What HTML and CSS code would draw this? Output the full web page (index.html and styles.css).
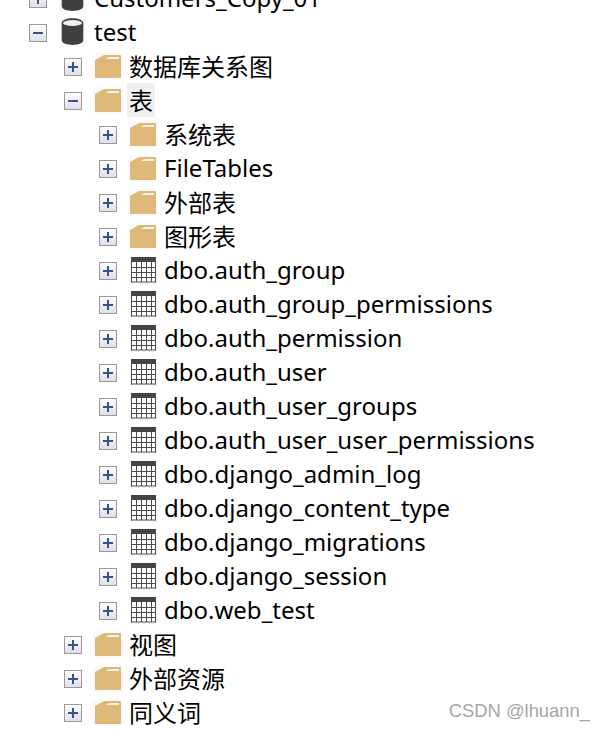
FILE: index.html
```html
<!DOCTYPE html>
<html lang="en">
	<head>
		<meta charset="UTF-8" />
		<meta name="viewport" content="width=device-width, initial-scale=1.0" />
		<title>Object Explorer</title>
		<link rel="stylesheet" href="styles.css">
	</head>
	<body>
		<svg class="defs" width="0" height="0">
			<linearGradient id="box" x1="0" y1="0" x2="0" y2="1">
				<stop offset="0" stop-color="#ffffff" />
				<stop offset="1" stop-color="#dcdfe6" />
			</linearGradient>
			<symbol id="plus" viewBox="0 0 18 18">
				<rect x="0.5" y="0.5" width="17" height="17" fill="url(#box)" stroke="#999" />
				<path d="M4 9h10M9 4v10" stroke="#36528f" stroke-width="2" />
			</symbol>
			<symbol id="minus" viewBox="0 0 18 18">
				<rect x="0.5" y="0.5" width="17" height="17" fill="url(#box)" stroke="#999" />
				<path d="M4 9h10" stroke="#36528f" stroke-width="2" />
			</symbol>
			<symbol id="folder" viewBox="0 0 30 30">
				<rect x="0" y="1" width="30" height="27" rx="3" fill="#fafafa" />
				<path d="M2 8l9-5h16q1 0 1 1v21q0 1-1 1h-24q-1 0-1-1z" fill="#deb878" />
				<path d="M13 7l3-2h10v2z" fill="#f7f3ea" />
			</symbol>
			<symbol id="db" viewBox="0 0 30 30">
				<rect x="1" y="0" width="27" height="29" rx="4" fill="#fafafa" />
				<path d="M3.700 5c0-6.500 21.600-6.500 21.600 0v17c0 6.500-21.600 6.500-21.600 0z" fill="#404040" />
				<ellipse cx="14.500" cy="5" rx="9.500" ry="3" fill="#f0f0f0" />
			</symbol>
			<symbol id="table" viewBox="0 0 30 30">
				<rect x="1" y="0" width="29" height="28" rx="2" fill="#fafafa" />
				<rect x="3" y="1" width="25" height="25.500" fill="#fff" />
				<rect x="3" y="1" width="25" height="5" fill="#444" />
				<path d="M3 11.500h25M3 16.500h25M3 21.500h25M3 26h25M3.500 1v25.500M8.500 6v20M13.500 6v20M18.500 6v20M23.500 6v20M27.500 1v25.500" stroke="#4c4c4c" />
			</symbol>
		</svg>

		<ul class="tree">
			<li class="node"><svg class="toggle"><use href="#plus" /></svg><svg class="icon"><use href="#db" /></svg><span class="label">Customers_Copy_01</span></li>
			<li class="node"><svg class="toggle"><use href="#minus" /></svg><svg class="icon"><use href="#db" /></svg><span class="label">test</span></li>
			<ul class="tree">
				<li class="node"><svg class="toggle"><use href="#plus" /></svg><svg class="icon"><use href="#folder" /></svg><span class="label">数据库关系图</span></li>
				<li class="node"><svg class="toggle"><use href="#minus" /></svg><svg class="icon"><use href="#folder" /></svg><span class="label selected">表</span></li>
				<ul class="tree">
					<li class="node"><svg class="toggle"><use href="#plus" /></svg><svg class="icon"><use href="#folder" /></svg><span class="label">系统表</span></li>
					<li class="node"><svg class="toggle"><use href="#plus" /></svg><svg class="icon"><use href="#folder" /></svg><span class="label">FileTables</span></li>
					<li class="node"><svg class="toggle"><use href="#plus" /></svg><svg class="icon"><use href="#folder" /></svg><span class="label">外部表</span></li>
					<li class="node"><svg class="toggle"><use href="#plus" /></svg><svg class="icon"><use href="#folder" /></svg><span class="label">图形表</span></li>
					<li class="node"><svg class="toggle"><use href="#plus" /></svg><svg class="icon"><use href="#table" /></svg><span class="label">dbo.auth_group</span></li>
					<li class="node"><svg class="toggle"><use href="#plus" /></svg><svg class="icon"><use href="#table" /></svg><span class="label">dbo.auth_group_permissions</span></li>
					<li class="node"><svg class="toggle"><use href="#plus" /></svg><svg class="icon"><use href="#table" /></svg><span class="label">dbo.auth_permission</span></li>
					<li class="node"><svg class="toggle"><use href="#plus" /></svg><svg class="icon"><use href="#table" /></svg><span class="label">dbo.auth_user</span></li>
					<li class="node"><svg class="toggle"><use href="#plus" /></svg><svg class="icon"><use href="#table" /></svg><span class="label">dbo.auth_user_groups</span></li>
					<li class="node"><svg class="toggle"><use href="#plus" /></svg><svg class="icon"><use href="#table" /></svg><span class="label">dbo.auth_user_user_permissions</span></li>
					<li class="node"><svg class="toggle"><use href="#plus" /></svg><svg class="icon"><use href="#table" /></svg><span class="label">dbo.django_admin_log</span></li>
					<li class="node"><svg class="toggle"><use href="#plus" /></svg><svg class="icon"><use href="#table" /></svg><span class="label">dbo.django_content_type</span></li>
					<li class="node"><svg class="toggle"><use href="#plus" /></svg><svg class="icon"><use href="#table" /></svg><span class="label">dbo.django_migrations</span></li>
					<li class="node"><svg class="toggle"><use href="#plus" /></svg><svg class="icon"><use href="#table" /></svg><span class="label">dbo.django_session</span></li>
					<li class="node"><svg class="toggle"><use href="#plus" /></svg><svg class="icon"><use href="#table" /></svg><span class="label">dbo.web_test</span></li>
				</ul>
				<li class="node"><svg class="toggle"><use href="#plus" /></svg><svg class="icon"><use href="#folder" /></svg><span class="label">视图</span></li>
				<li class="node"><svg class="toggle"><use href="#plus" /></svg><svg class="icon"><use href="#folder" /></svg><span class="label">外部资源</span></li>
				<li class="node"><svg class="toggle"><use href="#plus" /></svg><svg class="icon"><use href="#folder" /></svg><span class="label">同义词</span></li>
			</ul>
		</ul>

		<div class="watermark">CSDN @lhuann_</div>
	</body>
</html>
```

FILE: styles.css
```css
html,
body {
	margin: 0;
	padding: 0;
	background-color: white;
	height: 730px;
	overflow: hidden;
}
body {
	position: relative;
	font-family: "Noto Sans", "Noto Sans CJK SC", sans-serif;
	color: #000;
}
.defs {
	position: absolute;
}
.tree {
	list-style: none;
	margin: 0;
	padding: 0 0 0 35px;
}
body > .tree {
	margin-top: -18px;
	padding-left: 29px;
}
.node {
	display: flex;
	align-items: center;
	height: 34px;
	font-size: 24px;
	white-space: nowrap;
}
.toggle {
	width: 18px;
	height: 18px;
	flex: none;
	margin-right: 11px;
}
.icon {
	width: 30px;
	height: 30px;
	flex: none;
	margin-right: 6px;
}
.label {
	margin-bottom: 4px;
}
.selected {
	background-color: #f0f0f0;
	height: 34px;
	line-height: 36px;
	margin: 0 0 2px -2px;
	padding: 0 2px;
}
.watermark {
	position: absolute;
	right: 15px;
	bottom: 8px;
	font-family: "Liberation Sans", sans-serif;
	font-size: 18.4px;
	color: #a6a6a6;
}
```
